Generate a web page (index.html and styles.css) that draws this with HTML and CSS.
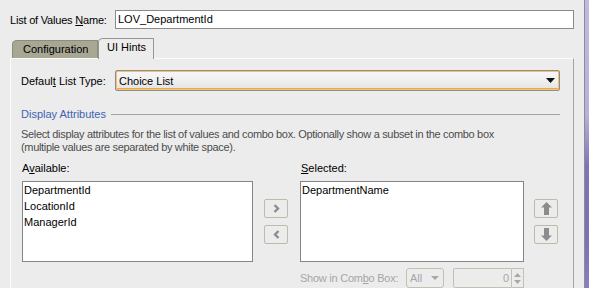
FILE: index.html
```html
<!DOCTYPE html>
<html>
<head>
<meta charset="utf-8">
<link rel="stylesheet" href="styles.css">
</head>
<body>
<div class="window">
  <div class="main">
    <div class="name-row">
      <span class="lbl">List of Values <u>N</u>ame:</span>
      <div class="textfield">LOV_DepartmentId</div>
    </div>
    <div class="tabs">
      <div class="tab config">Configuration</div>
      <div class="tab active">UI Hints</div>
    </div>
    <div class="panel">
      <div class="type-row">
        <span class="type-lbl">Defaul<u>t</u> List Type:</span>
        <div class="combo">
          <span>Choice List</span>
          <svg class="combo-arrow" width="9" height="6" viewBox="0 0 9 6"><polygon points="0,0 9,0 4.5,5" fill="#111"/></svg>
        </div>
      </div>
      <div class="section-head"><span>Display Attributes</span><div class="rule"></div></div>
      <p class="desc">Select display attributes for the list of values and combo box. Optionally show a subset in the combo box<br>(multiple values are separated by white space).</p>
      <div class="shuttle">
        <div class="col-lbl">A<u>v</u>ailable:</div>
        <div></div>
        <div class="col-lbl"><u>S</u>elected:</div>
        <div></div>
        <div class="list avail">
          <div>DepartmentId</div>
          <div>LocationId</div>
          <div>ManagerId</div>
        </div>
        <div class="btns">
          <div class="btn"><svg width="7" height="9" viewBox="0 0 7 9"><polyline points="1.5,1 5,4.5 1.5,8" fill="none" stroke="#8c8c8c" stroke-width="2.4"/></svg></div>
          <div class="btn"><svg width="7" height="9" viewBox="0 0 7 9"><polyline points="5.5,1 2,4.5 5.5,8" fill="none" stroke="#8c8c8c" stroke-width="2.4"/></svg></div>
        </div>
        <div class="list sel">
          <div>DepartmentName</div>
        </div>
        <div class="btns">
          <div class="btn"><svg width="11" height="13" viewBox="0 0 11 13"><polygon points="5.5,0 11,5.5 8,5.5 8,13 3,13 3,5.5 0,5.5" fill="#8c8c8c"/></svg></div>
          <div class="btn"><svg width="11" height="13" viewBox="0 0 11 13"><polygon points="5.5,13 11,7.5 8,7.5 8,0 3,0 3,7.5 0,7.5" fill="#8c8c8c"/></svg></div>
        </div>
        <div></div>
        <div></div>
        <div class="combo-row">
          <span class="dis-lbl">Show in Com<u>b</u>o Box:</span>
          <div class="mini-combo">
            <span>All</span>
            <svg width="8" height="5" viewBox="0 0 8 5"><polygon points="0,0 8,0 4,4" fill="#a8a8a8"/></svg>
          </div>
          <div class="spinner">
            <div class="spin-field">0</div>
            <div class="spin-btns">
              <svg width="7" height="4" viewBox="0 0 7 4"><polygon points="0,4 7,4 3.5,0" fill="#a8a8a8"/></svg>
              <svg width="7" height="4" viewBox="0 0 7 4"><polygon points="0,0 7,0 3.5,4" fill="#a8a8a8"/></svg>
            </div>
          </div>
        </div>
        <div></div>
      </div>
    </div>
  </div>
  <div class="frame"></div>
</div>
</body>
</html>
```

FILE: styles.css
```css
* { box-sizing: border-box; }
html, body { margin: 0; padding: 0; }
body {
  width: 589px;
  height: 288px;
  overflow: hidden;
  background: #ececec;
  font-family: "Liberation Sans", Arial, sans-serif;
  font-size: 11px;
  color: #000;
}
u { text-decoration: underline; text-underline-offset: 1px; }
.window { display: flex; height: 288px; }
.main { flex: 1; min-width: 0; padding: 10px 10px 0 10px; }
.frame {
  width: 5px;
  border-left: 1px solid #8c8c96;
  background: linear-gradient(to bottom, #c2b9de 0%, #b9b0da 40%, #8272b6 58%, #7e6eb4 80%, #8b7dc0 100%);
}

.name-row { display: flex; align-items: center; height: 19px; }
.lbl { width: 105px; white-space: nowrap; letter-spacing: -0.2px; }
.textfield {
  flex: 1;
  height: 19px;
  border: 1px solid #8a8a8a;
  background: #fff;
  padding: 0 2px;
  line-height: 17px;
}

.tabs { display: flex; align-items: flex-end; height: 20px; margin-top: 9px; padding-left: 2px; }
.tab { white-space: nowrap; }
.tab.config {
  width: 86px;
  height: 18px;
  line-height: 17px;
  padding-left: 10px;
  background: #a7a794;
  border: 1px solid #8d8d7b;
  border-bottom: none;
  border-top-left-radius: 5px 4px;
}
.tab.active {
  position: relative;
  z-index: 1;
  width: 56px;
  height: 21px;
  margin-bottom: -1px;
  line-height: 17px;
  padding-left: 8px;
  background: #ececec;
  border: 1px solid #979797;
  border-bottom: none;
  border-top-left-radius: 5px 4px;
}

.panel {
  height: 240px;
  border-top: 1px solid #fbfbfb;
  border-left: 1px solid #fbfbfb;
  border-right: 1px solid #a3a3a3;
  padding: 11px 13px 0 10px;
}

.type-row { display: flex; align-items: center; height: 21px; }
.type-lbl { width: 94px; white-space: nowrap; }
.combo {
  flex: 1;
  height: 21px;
  display: flex;
  align-items: center;
  justify-content: space-between;
  padding: 0 3px 0 3px;
  border: 1px solid #8e8e8e;
  border-radius: 2px;
  box-shadow: inset 0 0 0 1px #f1c274, inset 0 -1px 0 1px #e7ad4d;
  background: linear-gradient(to bottom, #f7f7f7 0%, #f0f0f0 50%, #e2e2e2 100%);
}
.combo-arrow { margin-right: 1px; }

.section-head {
  display: flex;
  align-items: center;
  gap: 5px;
  height: 13px;
  margin-top: 17px;
  color: #3c64b2;
  line-height: 13px;
}
.rule { flex: 1; height: 1px; background: #a4a4a4; }

.desc { margin: 7px 0 0 0; line-height: 13px; color: #4c4c4c; white-space: nowrap; letter-spacing: -0.33px; }

.shuttle {
  display: grid;
  grid-template-columns: 243px 36px 234px 24px;
  margin-top: 8px;
}
.col-lbl { line-height: 13px; margin: 0 0 6px 1px; }
.list {
  height: 81px;
  background: #fff;
  border: 1px solid #858585;
  line-height: 16px;
  padding-left: 1px;
}
.list.avail { width: 231px; margin-left: 1px; }
.list.sel { width: 224px; }
.btns { display: flex; flex-direction: column; gap: 7px; padding-top: 18px; }
.btn {
  width: 24px;
  height: 19px;
  border: 1px solid #bcbcab;
  border-radius: 2px;
  background: #ececec;
  display: flex;
  align-items: center;
  justify-content: center;
}

.combo-row { display: flex; align-items: center; height: 20px; margin-top: 6px; color: #a6a6a6; }
.dis-lbl { width: 106px; white-space: nowrap; letter-spacing: -0.25px; }
.mini-combo {
  width: 38px;
  height: 20px;
  border: 1px solid #c2c2b2;
  border-radius: 3px;
  display: flex;
  align-items: center;
  justify-content: space-between;
  padding: 0 4px 0 3px;
}
.spinner { display: flex; margin-left: 9px; height: 20px; width: 71px; }
.spin-field {
  flex: 1;
  border: 1px solid #c2c2b2;
  border-radius: 2px 0 0 2px;
  text-align: right;
  padding-right: 2px;
  line-height: 18px;
}
.spin-btns {
  width: 12px;
  border: 1px solid #c2c2b2;
  border-left: none;
  display: flex;
  flex-direction: column;
  align-items: center;
  justify-content: space-around;
  padding: 2px 0;
}
```
